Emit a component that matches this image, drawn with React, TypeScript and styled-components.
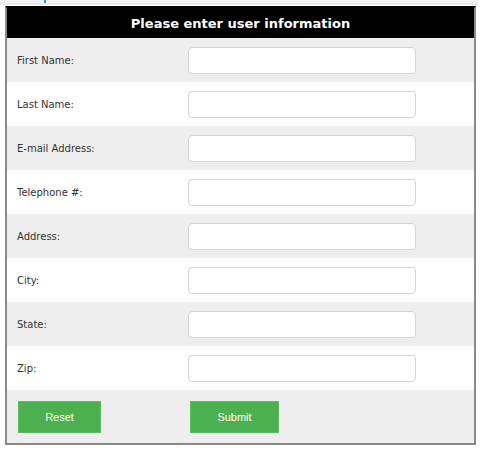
import styled, { createGlobalStyle } from 'styled-components'

const GlobalStyle = createGlobalStyle`
  body {
    margin: 0;
    background: #fff;
    font-family: "DejaVu Sans", Verdana, sans-serif;
  }
`

const TopBar = styled.div`
  height: 5px;
  width: 478px;
  background: linear-gradient(180deg, #f4f4f4 0%, #e9e9e9 100%);
  overflow: hidden;
  position: relative;
`

const TopLink = styled.span`
  display: block;
  margin-left: 44px;
  width: 2px;
  height: 3px;
  background: #4a90c8;
`

const Page = styled.div`
  padding: 1px 0 0 5px;
`

const Form = styled.form`
  width: 467px;
  border: 2px solid #8a8a8a;
  border-top-color: #000;
`

const Header = styled.div`
  height: 30px;
  background: #000;
  color: #fff;
  font-weight: bold;
  font-size: 13px;
  display: flex;
  align-items: center;
  justify-content: center;
`

const Row = styled.div<{ $shaded: boolean }>`
  display: grid;
  grid-template-columns: 173px 1fr;
  align-items: center;
  height: 44px;
  background: ${p => (p.$shaded ? '#eeeeee' : '#ffffff')};
`

const Label = styled.label`
  padding-left: 10px;
  font-size: 10px;
  color: #333;
`

const Input = styled.input`
  box-sizing: border-box;
  margin-left: 8px;
  width: 228px;
  height: 27px;
  border: 1px solid #d4d4d4;
  border-radius: 4px;
  background: #fff;
  outline: none;
`

const ButtonRow = styled.div`
  display: grid;
  grid-template-columns: 173px 1fr;
  height: 53px;
  background: #eeeeee;
  padding-top: 11px;
  box-sizing: border-box;
`

const Button = styled.button<{ $w: number; $ml: number }>`
  width: ${p => p.$w}px;
  height: 32px;
  margin-left: ${p => p.$ml}px;
  background: #4caf50;
  border: 1px solid #5bbd60;
  color: #fff;
  font-family: "Liberation Sans", Arial, sans-serif;
  font-size: 11px;
  cursor: pointer;
  padding: 0;
`

const fields = [
  'First Name:',
  'Last Name:',
  'E-mail Address:',
  'Telephone #:',
  'Address:',
  'City:',
  'State:',
  'Zip:',
]

export default function App() {
  return (
    <>
      <GlobalStyle />
      <TopBar>
        <TopLink />
      </TopBar>
      <Page>
        <Form onSubmit={e => e.preventDefault()}>
          <Header>Please enter user information</Header>
          {fields.map((f, i) => (
            <Row key={f} $shaded={i % 2 === 0}>
              <Label>{f}</Label>
              <div>
                <Input type="text" />
              </div>
            </Row>
          ))}
          <ButtonRow>
            <div>
              <Button type="reset" $w={83} $ml={11}>Reset</Button>
            </div>
            <div>
              <Button type="submit" $w={89} $ml={10}>Submit</Button>
            </div>
          </ButtonRow>
        </Form>
      </Page>
    </>
  )
}
